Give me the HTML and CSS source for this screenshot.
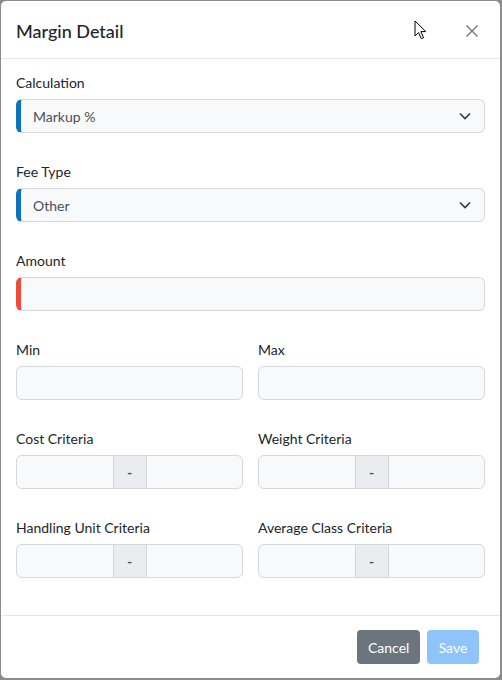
FILE: index.html
```html
<!DOCTYPE html>
<html>
<head>
<meta charset="utf-8">
<link rel="stylesheet" href="styles.css">
</head>
<body>
<div class="modal">
  <div class="modal-header">
    <h5 class="modal-title">Margin Detail</h5>
    <button class="close" aria-label="Close">
      <svg width="14" height="14" viewBox="0 0 14 14"><path d="M1.5 1.5 L12.5 12.5 M12.5 1.5 L1.5 12.5" stroke="#6c757d" stroke-width="1.4" fill="none"/></svg>
    </button>
    <svg class="cursor" width="14" height="20" viewBox="0 0 14 20"><path d="M1 1 L1 16 L4.5 12.5 L7.3 18.7 L9.6 17.7 L6.9 11.6 L11.8 11.6 Z" fill="#fff" stroke="#000" stroke-width="1" stroke-linejoin="round"/></svg>
  </div>
  <div class="modal-body">
    <div class="field">
      <label>Calculation</label>
      <div class="select mark-blue"><span>Markup %</span><svg class="chev" width="12" height="8" viewBox="0 0 12 8"><path d="M1 1.5 L6 6.5 L11 1.5" stroke="#343a40" stroke-width="1.6" fill="none"/></svg></div>
    </div>
    <div class="field">
      <label>Fee Type</label>
      <div class="select mark-blue"><span>Other</span><svg class="chev" width="12" height="8" viewBox="0 0 12 8"><path d="M1 1.5 L6 6.5 L11 1.5" stroke="#343a40" stroke-width="1.6" fill="none"/></svg></div>
    </div>
    <div class="field">
      <label>Amount</label>
      <div class="input mark-red"></div>
    </div>
    <div class="row">
      <div class="field">
        <label>Min</label>
        <div class="input"></div>
      </div>
      <div class="field">
        <label>Max</label>
        <div class="input"></div>
      </div>
    </div>
    <div class="row">
      <div class="field">
        <label>Cost Criteria</label>
        <div class="group"><div class="gi"></div><div class="addon">-</div><div class="gi"></div></div>
      </div>
      <div class="field">
        <label>Weight Criteria</label>
        <div class="group"><div class="gi"></div><div class="addon">-</div><div class="gi"></div></div>
      </div>
    </div>
    <div class="row">
      <div class="field">
        <label>Handling Unit Criteria</label>
        <div class="group"><div class="gi"></div><div class="addon">-</div><div class="gi"></div></div>
      </div>
      <div class="field">
        <label>Average Class Criteria</label>
        <div class="group"><div class="gi"></div><div class="addon">-</div><div class="gi"></div></div>
      </div>
    </div>
  </div>
  <div class="modal-footer">
    <button class="btn btn-cancel">Cancel</button>
    <button class="btn btn-save">Save</button>
  </div>
</div>
</body>
</html>
```

FILE: styles.css
```css
* { box-sizing: border-box; }
html, body { margin: 0; padding: 0; }
body {
  background: #8c8c8c;
  width: 502px;
  height: 680px;
  padding: 1px 2px 2px 1px;
  font-family: "Lato", "Liberation Sans", sans-serif;
  color: #212529;
}
.modal {
  background: #fff;
  width: 499px;
  height: 677px;
  border-radius: 5px;
  display: flex;
  flex-direction: column;
}
.modal-header {
  position: relative;
  display: flex;
  align-items: center;
  justify-content: space-between;
  height: 58px;
  padding: 0 15px;
  border-bottom: 1px solid #e4e6e9;
}
.modal-title {
  margin: 0;
  font-size: 18px;
  font-weight: 500;
  color: #212529;
  padding-top: 2px;
}
.close {
  background: none;
  border: 0;
  padding: 0;
  width: 14px;
  height: 14px;
  margin-right: 6px;
  margin-top: 2px;
  display: flex;
}
.cursor {
  position: absolute;
  left: 413px;
  top: 19px;
}
.modal-body {
  padding: 13px 15px 0 15px;
  display: flex;
  flex-direction: column;
  gap: 28px;
  flex: 1;
}
.field { display: flex; flex-direction: column; }
label {
  font-size: 14px;
  line-height: 21px;
  margin-bottom: 6px;
  color: #212529;
}
.row {
  display: grid;
  grid-template-columns: 1fr 1fr;
  column-gap: 15px;
}
.select, .input, .group {
  height: 34px;
  border: 1px solid #d4d7db;
  border-radius: 6px;
  background: #f8f9fb;
}
.select {
  display: flex;
  align-items: center;
  justify-content: space-between;
  padding: 0 13px 0 12px;
  font-size: 14px;
  color: #495057;
}
.mark-blue { border-left: 5px solid #0b74bd; }
.mark-red { border-left: 5px solid #f04a3c; }
.chev { display: block; }
.group {
  display: flex;
  overflow: hidden;
}
.gi { flex: 1; }
.addon {
  width: 34px;
  flex: none;
  background: #eaecef;
  border-left: 1px solid #d4d7db;
  border-right: 1px solid #d4d7db;
  display: flex;
  align-items: center;
  justify-content: center;
  font-size: 14px;
  font-weight: 700;
  color: #495057;
}
.modal-footer {
  border-top: 1px solid #e4e6e9;
  height: 63px;
  display: flex;
  justify-content: flex-end;
  align-items: center;
  gap: 7px;
  padding: 0 21px 0 0;
}
.btn {
  height: 34px;
  border: 0;
  border-radius: 4px;
  font-family: inherit;
  font-size: 14px;
  color: #fff;
  padding: 0 11px;
}
.btn-cancel { background: #6c757d; width: 63px; }
.btn-save { background: #8fc4fb; width: 52px; }
```
